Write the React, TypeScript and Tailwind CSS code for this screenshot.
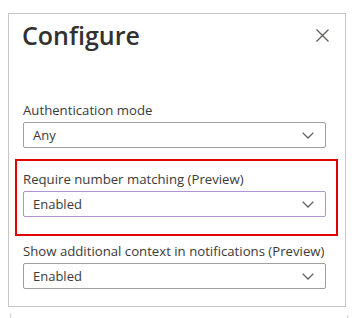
import { ReactNode } from 'react';

type FieldProps = {
  label: string;
  value: string;
  highlighted?: boolean;
  focused?: boolean;
  className?: string;
};

function Chevron() {
  return (
    <svg width="12" height="7" viewBox="0 0 12 7" fill="none" className="shrink-0">
      <path d="M0.6 0.6 L6 6 L11.4 0.6" stroke="#605e5c" strokeWidth="1.3" />
    </svg>
  );
}

function Dropdown({ value, focused }: { value: string; focused?: boolean }) {
  return (
    <div
      className={`flex h-[26px] w-[303px] items-center justify-between rounded-[2px] border pl-[9px] pr-[11px] ${
        focused ? 'border-[#b294d4]' : 'border-[#a19f9d]'
      }`}
    >
      <span className="text-[13px] leading-none text-[#3b3a39]">{value}</span>
      <Chevron />
    </div>
  );
}

function Field({ label, value, highlighted, focused, className = '' }: FieldProps) {
  return (
    <div
      className={`ml-[6px] mr-[7px] border-2 pl-[6px] pr-[9px] ${
        highlighted ? 'border-[#e30000] pt-[9px] pb-[17px]' : 'border-transparent'
      } ${className}`}
    >
      <div className="mb-[3px] text-[13.2px] leading-[18px] text-[#3b3a39]">{label}</div>
      <Dropdown value={value} focused={focused} />
    </div>
  );
}

function Panel({ children }: { children: ReactNode }) {
  return (
    <div className="h-[294px] w-[338px] border border-[#c8c6c4] bg-white">{children}</div>
  );
}

export default function App() {
  return (
    <div
      className="h-[318px] w-[357px] overflow-hidden bg-white pl-[8px] pt-[13px]"
      style={{ fontFamily: '"Open Sans", "Noto Sans", sans-serif' }}
    >
      <Panel>
        <div className="flex items-start justify-between pl-[13px] pr-[16px] pt-[4px]">
          <h1 className="text-[25px] font-semibold leading-[34px] text-[#323130]">Configure</h1>
          <button type="button" aria-label="Close" className="mt-[11px]">
            <svg width="13" height="13" viewBox="0 0 13 13" fill="none">
              <path d="M0.5 0.5 L12.5 12.5 M12.5 0.5 L0.5 12.5" stroke="#605e5c" strokeWidth="1.3" />
            </svg>
          </button>
        </div>
        <Field label="Authentication mode" value="Any" className="mt-[47px]" />
        <Field
          label="Require number matching (Preview)"
          value="Enabled"
          highlighted
          focused
          className="mt-[9px]"
        />
        <Field
          label="Show additional context in notifications (Preview)"
          value="Enabled"
          className="mt-[4px]"
        />
      </Panel>
      <div className="flex w-[340px] justify-between pl-[2px]">
        <span className="mt-[6px] h-[6px] w-px bg-[#d0d0d0]" />
        <span className="mt-[8px] h-[4px] w-px bg-[#d0d0d0]" />
      </div>
    </div>
  );
}
